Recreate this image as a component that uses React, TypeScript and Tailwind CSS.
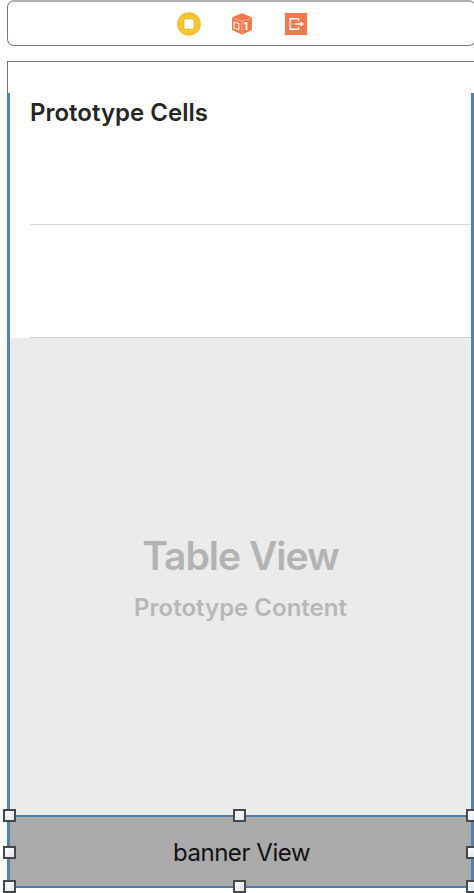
import React from 'react';
import clsx from 'clsx';

const ControllerIcon = () => (
  <svg width="24" height="24" viewBox="0 0 24 24">
    <circle cx="12" cy="12" r="11.8" fill="#f3bd35" />
    <circle cx="12" cy="12" r="9.6" fill="#fbc926" />
    <rect x="6.8" y="6.8" width="10.4" height="10.4" rx="1.5" fill="#fff" stroke="#e3ad2c" strokeWidth="1" />
  </svg>
);

const ResponderIcon = () => (
  <svg width="22" height="22" viewBox="0 0 22 22">
    <path d="M11 0.3 21 4.3V16.8L11 21.8 1 16.8V4.3Z" fill="#f5784b" />
    <path d="M1.2 4.9 11 8.4 20.8 4.9M11 8.4V21.4" fill="none" stroke="#fbb799" strokeWidth="0.9" />
    <path d="M3 9.2 7.8 10.6V16.6L3 15Z" fill="none" stroke="#fde0d4" strokeWidth="1.3" />
    <text x="12.6" y="17" fontSize="10.5" fontWeight="700" fill="#fff" fontFamily="Inter, sans-serif">1</text>
  </svg>
);

const ExitIcon = () => (
  <svg width="22" height="22" viewBox="0 0 22 22">
    <rect width="22" height="22" fill="#f67a4e" />
    <path d="M13.5 8.3V5.7H5.2V16.3H13.5V13.7" fill="none" stroke="#fff" strokeWidth="1.4" />
    <path d="M9.5 11H17" stroke="#fff" strokeWidth="1.4" />
    <path d="M15.5 8.2 19 11 15.5 13.8Z" fill="#fff" />
  </svg>
);

const Handle = ({ className }: { className: string }) => (
  <span
    className={clsx(
      'absolute h-[13px] w-[13px] border-2 border-[#484848] bg-linear-to-br from-white to-[#dbe7f2]',
      className,
    )}
  />
);

const Toolbar = () => (
  <div className="ml-[7px] flex h-[46px] w-[469px] shrink-0 items-center rounded-[7px] border border-t-2 border-[#777] border-t-[#b0b0b0] pl-[169px]">
    <ControllerIcon />
    <div className="ml-[30px]">
      <ResponderIcon />
    </div>
    <div className="ml-[32px]">
      <ExitIcon />
    </div>
  </div>
);

const PrototypeCells = () => (
  <div className="h-[245px] pl-5">
    <div className="h-[132px] border-b border-[#d8d8d8] pt-1">
      <h2 className="text-[24px] leading-8 font-semibold whitespace-nowrap text-[#262626]">Prototype Cells</h2>
    </div>
    <div className="h-[113px] border-b border-[#d0d0d0]" />
  </div>
);

const TablePlaceholder = () => (
  <div className="flex h-[477px] flex-col items-center bg-[#ebebeb] pt-[194px] whitespace-nowrap">
    <div className="text-[39px] leading-[48px] font-semibold tracking-[-1px] text-[#b3b3b3]">Table View</div>
    <div className="mt-[12px] text-[24px] leading-8 font-semibold text-[#b8b8b8]">Prototype Content</div>
  </div>
);

const BannerView = () => (
  <div className="relative flex h-[73px] items-center justify-center border-y-2 border-[#4a7dab] bg-[#aaaaaa] pt-[3px] pl-[2px]">
    <span className="text-[24px] leading-8 tracking-[-0.45px] text-[#111]">banner View</span>
    <Handle className="-top-[8px] -left-[7px]" />
    <Handle className="top-[29px] -left-[7px]" />
    <Handle className="top-[63px] -left-[7px]" />
    <Handle className="-top-[8px] left-[223px]" />
    <Handle className="top-[63px] left-[223px]" />
    <Handle className="-top-[8px] left-[456px]" />
    <Handle className="top-[29px] left-[456px]" />
    <Handle className="top-[63px] left-[456px]" />
  </div>
);

const App = () => {
  return (
    <div className="flex h-[893px] w-[474px] flex-col overflow-hidden bg-white font-['Inter',sans-serif]">
      <Toolbar />
      <div className="mt-[15px] ml-[7px] h-8 shrink-0 border-t border-l border-[#777]" />
      <div className="ml-[7px] h-[795px] shrink-0 border-x-[3px] border-[#5083b0]">
        <PrototypeCells />
        <TablePlaceholder />
        <BannerView />
      </div>
    </div>
  );
};

export default App;
